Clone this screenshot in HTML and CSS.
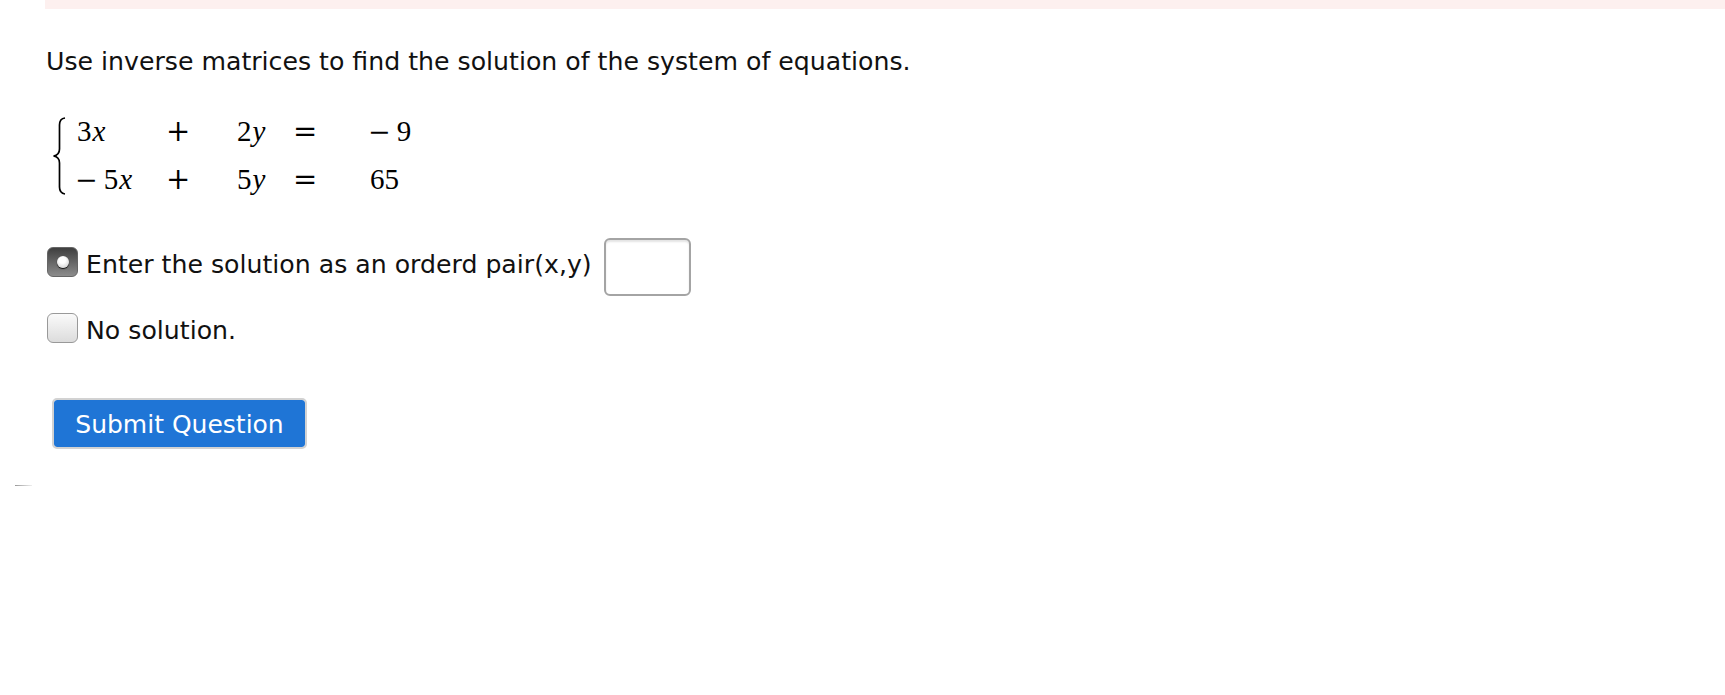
FILE: index.html
```html
<!DOCTYPE html>
<html lang="en">
<head>
    <meta charset="UTF-8">
    <title>Question</title>
    <meta name="viewport" content="width=device-width, initial-scale=1.0">
    <link rel="stylesheet" href="styles.css">
</head>
<body>
    <div class="banner"></div>
    <div class="question">
        <p class="prompt">Use inverse matrices to find the solution of the system of equations.</p>
        <div class="system">
            <svg class="brace" width="14" height="78" viewBox="0 0 14 78">
                <path d="M13 1 C9 1.5 7.5 3.5 7.5 8 L7.5 32 C7.5 36 5 38.5 1.5 39 C5 39.5 7.5 42 7.5 46 L7.5 70 C7.5 74.5 9 76.5 13 77" fill="none" stroke="#000" stroke-width="1.7"/>
            </svg>
            <div class="eqs">
                <span>3<i>x</i></span>
                <span class="op">+</span>
                <span>2<i>y</i></span>
                <span class="op">=</span>
                <span><span class="neg">−</span>9</span>

                <span><span class="neg">−</span>5<i>x</i></span>
                <span class="op">+</span>
                <span>5<i>y</i></span>
                <span class="op">=</span>
                <span>65</span>
            </div>
        </div>
        <div class="choices">
            <label class="choice first">
                <span class="radio checked"><span class="dot"></span></span>
                <span class="label">Enter the solution as an orderd pair(x,y)</span>
                <input type="text" class="answer">
            </label>
            <label class="choice">
                <span class="radio"></span>
                <span class="label">No solution.</span>
            </label>
        </div>
        <button class="submit">Submit Question</button>
    </div>
    <div class="stub"></div>
</body>
</html>
```

FILE: styles.css
```css
body {
    margin: 0;
    background: #fff;
    color: #111;
    font-family: 'DejaVu Sans', Verdana, sans-serif;
    font-size: 25.2px;
    line-height: 30px;
}
.banner {
    margin-left: 45px;
    height: 9px;
    background: #fdf0ef;
}
.question {
    padding-left: 46px;
}
.prompt {
    margin: 38px 0 0 0;
}
.system {
    display: flex;
    align-items: flex-start;
    margin-top: 30px;
}
.brace {
    margin: 10px 0 0 6px;
}
.eqs {
    display: grid;
    grid-template-columns: 91px 69px 58px 75px auto;
    grid-auto-rows: 48px;
    margin-left: 11px;
    font-family: 'Liberation Serif', 'Times New Roman', serif;
    font-size: 29px;
    line-height: 48px;
    color: #000;
}
.eqs i {
    font-style: italic;
    margin-left: 1px;
}
.eqs .op {
    font-family: 'DejaVu Serif', serif;
    font-size: 29px;
    margin-left: -2px;
}
.eqs .neg {
    font-family: 'DejaVu Serif', serif;
    font-size: 27px;
    margin: 0 6px 0 -2px;
}
.choices {
    margin-top: 35px;
}
.choice {
    display: flex;
    align-items: flex-start;
}
.choice + .choice {
    margin-top: 17px;
}
.radio {
    box-sizing: border-box;
    width: 31px;
    height: 30px;
    margin: 9px 0 0 1px;
    border: 1.5px solid #999;
    border-radius: 6px;
    background: linear-gradient(#fafafa, #dcdcdc);
    display: flex;
    align-items: center;
    justify-content: center;
}
.choice + .choice .radio {
    margin-top: 0;
}
.radio.checked {
    border-color: #666;
    background: linear-gradient(#3f3f3f, #8c8c8c);
}
.dot {
    width: 12px;
    height: 12px;
    border-radius: 50%;
    background: radial-gradient(circle at 45% 35%, #fff 30%, #c4c4c4 100%);
    box-shadow: 0 1px 1px #111;
}
.label {
    margin: 12px 0 0 8px;
}
.choice + .choice .label {
    margin-top: 3px;
}
.answer {
    box-sizing: border-box;
    width: 87px;
    height: 58px;
    margin-left: 12px;
    border: 2px solid #a4a4a4;
    border-radius: 6px;
    box-shadow: inset 0 2px 2px #e4e4e4;
    background: #fff;
}
.submit {
    box-sizing: border-box;
    width: 255px;
    height: 51px;
    margin: 52px 0 0 6px;
    padding: 10px 0 7px 0;
    border: 2px solid #d2d2d2;
    border-radius: 5px;
    background: #1f75d6;
    background-clip: padding-box;
    color: #fff;
    font-family: 'DejaVu Sans', Verdana, sans-serif;
    font-size: 25px;
    line-height: 30px;
    cursor: pointer;
}
.stub {
    width: 17px;
    height: 1px;
    margin: 36px 0 0 15px;
    background: linear-gradient(to right, #999, #eee);
}
```
